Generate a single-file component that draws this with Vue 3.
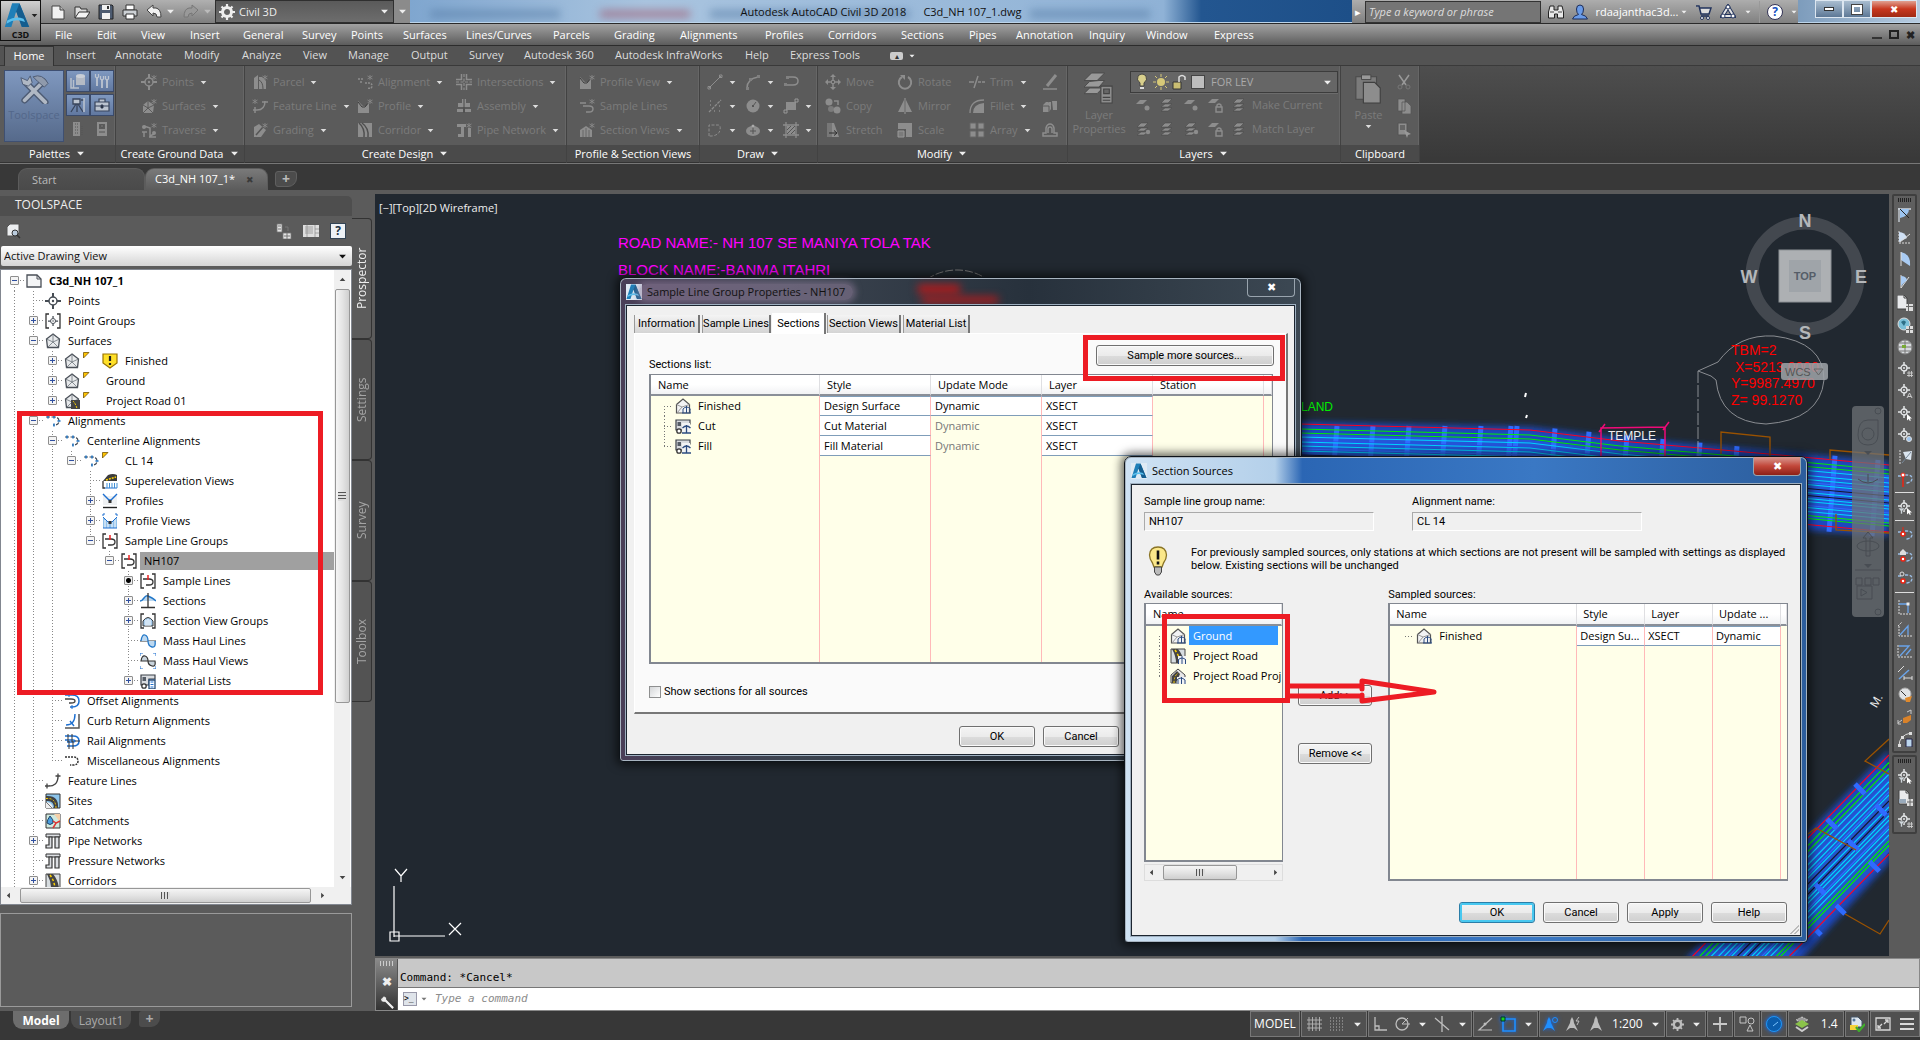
<script setup>
import { h } from 'vue'

const G = '#8d8d8d'
const star = '<path d="M13 1v5M10.500 2l5 3M15.500 2l-5 3" stroke="currentColor" stroke-width=".8" fill="none"/>'
const cross = (c) => `<circle cx="8" cy="8" r="4" fill="none" stroke="${c}" stroke-width="1.500"/><circle cx="8" cy="8" r="1.200" fill="${c}"/><path d="M8 0v4M8 12v4M0 8h4M12 8h4" stroke="${c}" stroke-width="2"/>`
const surf = '<path d="M8 1l6.500 5-1 8.500H2.500L1.500 6z" fill="#e8eaec" stroke="#4a5058" stroke-width="1.300"/><path d="M8 1v8l6.500-3M8 9L1.500 6M8 9l-5.500 5.500M8 9l5.500 5.500" stroke="#6c737b" fill="none" stroke-width=".8"/>'
const surfSec = '<path d="M1.500 6.500L8 1l6.500 5.500V15h-13z" fill="#f2f3f4" stroke="#555" stroke-width="1.200"/><path d="M1.500 6.500L7 9l7.500-2.500M7 9l-5 6" stroke="#999" fill="none"/><path d="M7 15h9M8 11q3.500-4 7.500 0M11.500 8v7M8 11v4M15 11v4" stroke="#2c4c80" fill="none"/>'
const truck = '<path d="M1 2h14v4H9v6H1z" fill="#d9dce0" stroke="#3b4048" stroke-width="1.200"/><path d="M2.500 4H6v4H2.500z" fill="#555c66"/><circle cx="4" cy="13" r="2.200" fill="#fff" stroke="#333" stroke-width="1.300"/>'
const road = '<path d="M1 1h14v14H1z" fill="#d7dde0" stroke="#444" stroke-width="1"/><path d="M2 1h6q5 6 6 14H6Q6 8 2 1z" fill="#454545"/><path d="M5 2q4 5 5 13" stroke="#ffd200" stroke-width="1.500" stroke-dasharray="2.500 2" fill="none"/>'
const align = '<path d="M1 4h8q5 0 5 4t-5 4H8" fill="none" stroke="#444b55" stroke-width="1.200" stroke-dasharray="4 1.500"/><path d="M3 2.500v3M9 2.500v3M9 10.500v3M12.500 8h3" stroke="#1a6fc0" stroke-width="1.500"/>'
const bracket = '<path d="M4 1H1v14h3M12 1h3v14h-3" stroke="#333" stroke-width="1.300" fill="none"/>'
const net = '<path d="M1 1h14v3H1z" fill="#dcdfe3" stroke="#333"/><path d="M4 4h3v11H1v-3h3zM10 4h4v11h-4z" fill="#dcdfe3" stroke="#333" stroke-width="1.200"/>'
const sheets = '<path d="M2 6l4-4h7l-4 4zM2 10l4-3h7l-4 3zM2 14l4-3h7l-4 3z" fill="currentColor" stroke="#4a4a4a" stroke-width=".6"/>'
const page = '<path d="M3 1h7l3 3v11H3z" fill="#e9eaec" stroke="#444"/><path d="M10 1v3h3" fill="none" stroke="#444"/>'
const target = (x) => `<circle cx="7" cy="7" r="3" fill="none" stroke="#e4e6e8" stroke-width="1.300"/><circle cx="7" cy="7" r="1" fill="#e4e6e8"/><path d="M7 1v3M7 10v3M1 7h3M10 7h3" stroke="#e4e6e8" stroke-width="1.500"/>${x}`
const hash = '<path d="M10 12h6M10 14.500h6M12 10v6M14.500 10v6" stroke="#ccc" stroke-width=".9"/>'
const funnel = '<path d="M1 9h7l-2.500 3v3h-2v-3z" fill="#cfd6db" stroke="#555" stroke-width=".6"/>'
const arrowCur = '<path d="M10 9v6.500l1.800-1.500 1 2 1-.6-.9-1.900H15z" fill="#fff"/>'
const redAlign = '<path d="M1 5h3M8 4h2q5 0 5 3.500T10 12H8" fill="none" stroke="#9cc0e8" stroke-width="1.300" stroke-dasharray="3 1.500"/>'

const icons = {
  tri: '<path d="M3 5.500h10L8 11z" fill="currentColor"/>',
  newf: '<path d="M2 2h8l4 4v9H2z" fill="#f1f1f1" stroke="#444"/><path d="M10 2v4h4" fill="#bbb" stroke="#444"/>',
  open: '<path d="M1 14V3h5l1 2h6v3" fill="#ddd" stroke="#333"/><path d="M1 14l4-6h11l-4 6z" fill="#f3f3f3" stroke="#333"/>',
  save: '<path d="M1 1h13l1 1v13H1z" fill="#4d5b70" stroke="#222"/><path d="M4 1h8v5H4zM4 9h8v6H4z" fill="#f1f1f1"/><path d="M9 2h2v3H9z" fill="#333"/>',
  print: '<path d="M4 1h8v5H4z" fill="#fff" stroke="#333"/><path d="M1 6h14v6H1z" fill="#ccd0d4" stroke="#333"/><path d="M4 10h8v5H4z" fill="#fff" stroke="#333"/>',
  undo: '<path d="M1 6l6-5v3h3q5 1 5 9H11q0-4-4-4v3z" fill="#f0f0f0" stroke="#444"/>',
  redo: '<path d="M15 6L9 1v3H6q-5 1-5 9h4q0-4 4-4v3z" fill="#999" stroke="#777"/>',
  gear: '<circle cx="8" cy="8" r="4.500" fill="none" stroke="currentColor" stroke-width="3"/><path d="M8 0v3M8 13v3M0 8h3M13 8h3M2.500 2.500l2 2M11.500 11.500l2 2M13.500 2.500l-2 2M4.500 11.500l-2 2" stroke="currentColor" stroke-width="2.200"/>',
  binoc: '<path d="M2 2h4v4h4V2h4l1.500 6v6h-6v-4h-3v4h-6V8z" fill="#e8e8e8" stroke="#222"/><path d="M2 8h4M10 8h4" stroke="#444"/>',
  user: '<path d="M8 1q3.500 0 3.500 4T9.500 10.500q5 1 6 4.500H.5q1-3.500 6-4.500Q4.500 9 4.500 5T8 1z" fill="#6a9be8" stroke="#1c2c58"/>',
  cart: '<path d="M0 2h3l2 8h8l2-6H4M5 12h8" fill="#ddd" stroke="#22335c" stroke-width="1.500"/><circle cx="6" cy="14" r="1.500" fill="#fff" stroke="#22335c"/><circle cx="12" cy="14" r="1.500" fill="#fff" stroke="#22335c"/>',
  a360: '<path d="M8 3L2.500 12h11z" fill="none" stroke="#22335c" stroke-width="4"/><path d="M8 3L2.500 12h11z" fill="none" stroke="#e6e6e6" stroke-width="2"/><circle cx="8" cy="3" r="2" fill="#fff" stroke="#22335c"/><circle cx="3" cy="12" r="2" fill="#fff" stroke="#22335c"/><circle cx="13" cy="12" r="2" fill="#fff" stroke="#22335c"/>',
  wrench: '<path d="M3 3l12 12" stroke="#333" stroke-width="4"/><path d="M3 3l12 12" stroke="#eee" stroke-width="2.500"/><path d="M1 4l3 1 1-1-1-3 3 2v3L5 8 2 7z" fill="#eee"/>',
  toolspace: '<path d="M4 5l10 10M13 4L3 14" stroke="#4d5b73" stroke-width="3.500" stroke-linecap="round"/><path d="M4 5l10 10M13 4L3 14" stroke="#b0b8c4" stroke-width="2" stroke-linecap="round"/><path d="M1 2l1 3.500 3 1 2-2L6 1 4.500 3.500z" fill="#b0b8c4" stroke="#4d5b73" stroke-width=".5"/><path d="M7.500 1.500q5-2 8 3.500l-2 2-3.500-3z" fill="#8f9aac" stroke="#4d5b73" stroke-width=".5"/>',
  db: '<path d="M6 3v9h9V3" fill="#b4bac4"/><ellipse cx="10.500" cy="3" rx="4.500" ry="2" fill="#c9ced6"/><path d="M1 5v10h8M3.500 7v8" stroke="#b8c0cc" stroke-width="1.500" fill="none"/>',
  tools: '<path d="M1.500 1v3l1.500 1 1.500-1V1M6.500 3v3L8 7l1.500-1V3M11.500 3v3l1.500 1 1.500-1V3" fill="none" stroke="#bcc4d0" stroke-width="1.300"/><path d="M3 5v8M8 7v8M13 7v8" stroke="#bcc4d0" stroke-width="1.800"/>',
  survey: '<path d="M3 2h7v5H3zM11 3h3M6 7L1 15M7 7v8M8 7l5 8" stroke="#39455c" fill="#bcc4d0" stroke-width="1.300"/><path d="M14 1v14" stroke="#bcc4d0" stroke-width="1.500"/>',
  toolbox: '<path d="M1 5h14v9H1zM5 5V2h6v3" fill="#bcc4d0" stroke="#39455c" stroke-width="1.200"/><path d="M1 9h14M7 8h2v3H7z" stroke="#39455c"/>',
  calc: `<path d="M3 1h7v14H3z" fill="${G}"/><path d="M5 3h3M5 6h3M5 9h3M5 12h3M12 5v10" stroke="#555" stroke-dasharray="1 1"/>`,
  palette: `<path d="M3 1h10v14H3z" fill="${G}"/><path d="M5 3h6v5H5z" fill="#5b5b5b"/><path d="M7 4h2v2H7zM5 11h6" fill="#aaa" stroke="#555"/>`,
  points: `${cross(G)}${star}`,
  surfaces: `<path d="M2 7l5-4 6 4-1 8H2z" fill="${G}"/><path d="M7 3v7L2 7M7 10l6-3M7 10l-5 5M7 10l5 5" stroke="#5b5b5b" fill="none"/>${star}`,
  traverse: `<path d="M3 4l6 2v8l4-2M1 10h5M3 10v5M2 5h3M8 15h7" fill="none" stroke="${G}" stroke-width="1.500"/><circle cx="3" cy="5" r="2" fill="${G}"/><circle cx="13" cy="11" r="2" fill="${G}"/>${star}`,
  parcel: `<path d="M2 4l4-3v14H2zM7 3h3l4 4v8H7z" fill="${G}"/><path d="M7 6q4 2 4 9" stroke="#555" fill="none"/>${star}`,
  feature: `<path d="M1 12h4q8 0 8-9M10 4h6M3 9v6" fill="none" stroke="${G}" stroke-width="1.500"/><path d="M3 1v5M.5 2l5 3M5.500 2l-5 3" stroke="${G}" stroke-width=".8"/>`,
  grading: `<path d="M2 5l5-3 7 6-5 7H2z" fill="${G}"/><path d="M4 13l7-8" stroke="#555" stroke-width="1.500"/>${star}`,
  alignment: `<path d="M1 5h6M3 8h3M8 9h4q3 0 3 3t-5 2" fill="none" stroke="${G}" stroke-width="1.500" stroke-dasharray="2 1"/>${star}`,
  profile: `<path d="M1 3l5 5h3l3-4v11H1z" fill="${G}"/><path d="M1 4l4 5h3l4-5" stroke="#3c3c3c" fill="none"/>${star}`,
  corridor: `<path d="M1 1h14v14H1z" fill="${G}"/><path d="M2 1q6 5 5 14M5 1q7 5 6 14" stroke="#4f4f4f" stroke-width="1.500" fill="none"/>`,
  intersect: `<path d="M5.500 0v5.500H0M10.500 0v5.500H16M5.500 16v-5.500H0M10.500 16v-5.500H16" fill="none" stroke="${G}" stroke-width="1.500"/><path d="M8 0v16M0 8h16" stroke="${G}" stroke-width="1.200" stroke-dasharray="3 1.500"/>`,
  assembly: `<path d="M6 1h4v4h4v4H2V5h4zM1 11h6v3H1zM9 11h6v3H9z" fill="${G}"/><path d="M8 1v14" stroke="#4a4a4a"/>`,
  pipenet: `<path d="M1 2h9v3H8v10H2v-3h3V5H1zM12 6h3v9h-3z" fill="${G}"/>${star}`,
  sline: `<path d="M1 5h6M4 8h6q4 0 4 3t-4 3H7" fill="none" stroke="${G}" stroke-width="1.400"/>${star}`,
  sview: `<path d="M1 15V8l6-4 6 4v7z" fill="${G}"/><path d="M4 8v7M7 6v9M10 8v7" stroke="#666"/>${star}`,
  line: `<path d="M2 14L14 2" stroke="${G}"/><path d="M1 12.500h2.500V15H1zM12.500 1H15v2.500h-2.500z" fill="none" stroke="#999" stroke-width=".8"/>`,
  arc: `<path d="M2 14q0-9 11-11" stroke="${G}" fill="none" stroke-width="1.500"/><path d="M1 13h3v3H1zM12 1h3v3h-3zM4 4h3v3H4z" fill="#808080"/>`,
  pline: `<path d="M4 3h6q5 0 5 4t-5 4H3" stroke="${G}" fill="none" stroke-width="1.500"/><path d="M3 2h3v3H3zM1 9h3v3H1z" fill="#808080"/>`,
  cline: `<path d="M2 14L14 2M3 3h1M12 13h1M3 7h1M12 8h1M7 13h1" stroke="${G}" stroke-width="1.300" stroke-dasharray="3 1"/>`,
  circle: `<circle cx="8" cy="8" r="6.500" fill="${G}"/><path d="M8 8l3-4" stroke="#555"/><path d="M7 7h2v2H7z" fill="#555"/>`,
  rect: `<path d="M3 4h10v8H3z" fill="${G}"/><path d="M12 1h3v3h-3zM1 12h3v3H1z" fill="none" stroke="#999"/>`,
  arc2: `<path d="M2 14V3h9q3 0 2 5t-8 6z" stroke="${G}" fill="none" stroke-dasharray="3 1.500"/>`,
  ellipse: `<ellipse cx="8" cy="9" rx="7" ry="5" fill="${G}"/><path d="M8 2v10M5 9h6" stroke="#555"/><circle cx="8" cy="4" r="1.500" fill="#aaa"/>`,
  hatch: `<path d="M3 0v16M13 0v16M0 3h16M0 13h16" stroke="${G}" stroke-width="1.300"/><path d="M4 4h8v8H4z" fill="${G}"/><path d="M4 8l4-4M4 12l8-8M8 12l4-4" stroke="#555"/>`,
  move: `<path d="M8 0l3 3H5zM8 16l3-3H5zM0 8l3-3v6zM16 8l-3-3v6z" fill="${G}"/><path d="M8 3v3M8 10v3M3 8h3M10 8h3" stroke="${G}" stroke-width="1.500"/><path d="M6.500 6.500h3v3h-3z" fill="none" stroke="${G}"/>`,
  copy: `<circle cx="4" cy="4" r="3.500" fill="${G}"/><circle cx="6" cy="11" r="3" fill="#7b7b7b"/><circle cx="12" cy="12" r="3.500" fill="${G}"/><path d="M9 3h4v4" stroke="${G}" fill="none" stroke-width="1.500"/>`,
  stretch: `<path d="M2 1h7l5 14H2z" fill="${G}"/><path d="M2 1h5v14H2z" fill="#777"/><path d="M4 11h7M9 8.500l3 2.500-3 2.500" stroke="#2d2d2d" fill="none"/>`,
  rotate: `<path d="M5 3a6.200 6.200 0 1 0 6 0" stroke="${G}" fill="none" stroke-width="2"/><path d="M3 1h5v5z" fill="${G}"/>`,
  mirror: `<path d="M7 2v12H1zM9 2v12h6z" fill="${G}"/><path d="M8 0v16" stroke="#aaa" stroke-width=".8"/>`,
  scale: `<path d="M1 1h14v14h-6V7H1z" fill="${G}"/><path d="M1 9h6v6H1z" fill="#7b7b7b" stroke="#999"/>`,
  trim: `<path d="M0 8h5M9 8h3M13 8h3M9 2L5 14" stroke="${G}" stroke-width="1.500"/>`,
  fillet: `<path d="M4 15q0-9 11-10v10z" fill="${G}"/><path d="M1 15Q1 2 15 2" stroke="${G}" fill="none" stroke-width="1.300"/>`,
  array: `<path d="M1 1h6v6H1zM9 1h6v6H9zM1 9h6v6H1zM9 9h6v6H9z" fill="${G}" stroke="#666"/>`,
  erase: `<path d="M14 1L5 12" stroke="${G}" stroke-width="3"/><path d="M1 15h14" stroke="${G}" stroke-width="1.500"/>`,
  explode: `<path d="M1 7l3-3h5v7l-2 3H1zM10 3h5v9h-4z" fill="${G}"/><path d="M1 8h6v6M6 4l4-2" stroke="#5b5b5b" fill="none"/>`,
  offset: `<path d="M1 14h14v-3h-3V6q-1-4-4-4T4 6v5H1zM6 11V7q0-2 2-2t2 2v4" fill="none" stroke="${G}" stroke-width="1.500"/>`,
  sheets,
  sheetB: sheets + '<circle cx="13" cy="11" r="2.200" fill="currentColor"/>',
  sheetO: '<path d="M1 7l4-4h7L8 7z" fill="currentColor"/><circle cx="12" cy="11" r="2.500" fill="currentColor"/>',
  sheetL: '<path d="M1 6l4-4h7L8 6z" fill="currentColor"/><path d="M9 10h6v5H9zM10 10V8q2-2 4 0v2" fill="none" stroke="currentColor" stroke-width="1.400"/>',
  layerprops: '<path d="M0 4l4-4h7L7 4zM0 7.500l3-3 5-.5h3L8 7.500zM0 11l3-3h7l-3 3z" fill="currentColor" stroke="#4a4a4a" stroke-width=".5"/><path d="M9 7h6v9H9z" fill="#8d8d8d" stroke="#444" stroke-width=".6"/><path d="M10.500 8.500h3v2.500h-3zM10 13h4M10 14.500h4" stroke="#444" stroke-width=".6" fill="#666"/>',
  paste: `<path d="M1 2h11v12H1z" fill="#7b7b7b" stroke="#4a4a4a" stroke-width=".6"/><path d="M4 1h5v2.500H4z" fill="#999" stroke="#444" stroke-width=".5"/><path d="M5 5h6l3 3v8H5z" fill="${G}" stroke="#3f3f3f" stroke-width=".6"/>`,
  cut: `<path d="M3 1l7 10M13 1L6 11" stroke="#999" stroke-width="1.500"/><circle cx="4" cy="13" r="2" fill="none" stroke="#777"/><circle cx="12" cy="13" r="2" fill="none" stroke="#777"/>`,
  copyc: `<path d="M2 1h7v12H2zM6 4h5l4 4v8H6z" fill="${G}" stroke="#555" stroke-width=".7"/>`,
  pastes: `<path d="M2 1h9v12H2z" fill="${G}" stroke="#555"/><path d="M4 3h5v5H4z" fill="#666"/><path d="M8 8l7 4-3 1-1 3z" fill="#999"/>`,
  // toolspace tree
  doc: '<path d="M1 2h10l4 4v8H1z" fill="#f4f5f6" stroke="#4a4f57" stroke-width="1.300"/><path d="M11 2v4h4" fill="none" stroke="#4a4f57"/>',
  tpoints: cross('#464c54'),
  tgroups: bracket + '<g transform="translate(3 3) scale(.63)">' + cross('#464c54') + '</g>',
  surf,
  surfroad: surf + '<path d="M7 7h9v9H7z" fill="#444"/><path d="M9 8q3 3 4 8" stroke="#ffd200" stroke-dasharray="2 1" fill="none"/>',
  align,
  superel: '<path d="M1 8l5-6q5-2 9 0v6z" fill="#3c3c3c"/><path d="M4 7l10-3" stroke="#ffd200" stroke-width="1.500" stroke-dasharray="2 1"/><path d="M1 8v7h2" fill="none" stroke="#333" stroke-width="1.300"/><path d="M3 15h12" stroke="#1d6fd0"/><path d="M5 10v5M7.500 10v5M10 10v5M12.500 10v5M15 10v5" stroke="#3f8fd6"/>',
  tprofile: '<path d="M1 3h14v9H1z" fill="#eef0f2"/><path d="M1 1l6 6h2l6-6" stroke="#1d6fd0" fill="none" stroke-width="1.400"/><path d="M6.500 7h3v3h-3z" fill="#333"/><path d="M1 14.500h14" stroke="#222" stroke-width="1.400"/>',
  tpview: '<path d="M1 4l5 5h4l5-5v11H1z" fill="#8fc0ea"/><path d="M3 7v8M6 9v6M10 9v6M13 6v9" stroke="#fff"/><path d="M1 4l5 5h4l5-5" stroke="#1d6fd0" fill="none"/><path d="M6.500 8h3v3h-3z" fill="#333"/><path d="M1 3V1h2M15 3V1h-2M1 15h14" stroke="#1d6fd0" fill="none"/>',
  slg: bracket + '<path d="M3 6h6q4 0 4 3t-4 3H6" fill="none" stroke="#333" stroke-width="1.300"/><path d="M8 2v5" stroke="#e22" stroke-width="1.500"/>',
  tsection: '<path d="M1 8q7-9 14 0z" fill="#bcd8f0"/><path d="M0 8q2 0 4-3t4-2 4 2 4 3" stroke="#2277c8" fill="none" stroke-width="1.400"/><path d="M8 0v15M1 14.500h14" stroke="#333" stroke-width="1.300"/>',
  tsvg: bracket + '<path d="M3 13V8q5-7 10 0v5z" fill="#a8cdee" stroke="#333"/><path d="M6 7v6M8 6v7M10 7v6" stroke="#fff"/>',
  mass: '<path d="M0 8h16" stroke="#333"/><path d="M1 8q1-7 4-6t3 6 4 6 3-6" fill="#bcd8f0" stroke="#2277c8" stroke-width="1.300"/>',
  massv: '<path d="M1 8q1-6 4-5t3 5 4 5 3-5z" fill="#c8d3dc" stroke="#333" stroke-width="1.200"/><path d="M0 3V0h3M16 3V0h-3M0 13v3h3M16 13v3h-3" stroke="#1d6fd0" fill="none"/>',
  material: truck + '<path d="M9 7h6v9H9z" fill="#fff" stroke="#234a78" stroke-width="1.300"/><path d="M10.500 9h3M10.500 11.500h3M10.500 14h3" stroke="#1d6fd0"/>',
  offs: '<path d="M1 2h7q7 0 7 6t-7 6H6" fill="none" stroke="#1d6fd0" stroke-width="1.500"/><path d="M1 6h6q4 0 4 2t-4 2H5" fill="none" stroke="#444" stroke-width="1.300"/><path d="M5 0v4M8 12v4" stroke="#1d6fd0"/>',
  curb: '<path d="M15 1v14H1" fill="none" stroke="#555" stroke-width="1.500"/><path d="M2 12q9 0 9-11M6 8l4 5" stroke="#1d6fd0" fill="none" stroke-width="1.400"/>',
  rail: '<path d="M1 3h8q6 0 6 5t-6 5H3M1 7h8q2 0 2 1t-2 1H3" fill="none" stroke="#1d6fd0" stroke-width="1.500"/><path d="M4 1v8M8 1v8M5 8v8M9 8v8M11 8h5" stroke="#333"/>',
  misc: '<path d="M1 4h8q5 0 5 4t-5 4H6" fill="none" stroke="#333" stroke-width="1.500" stroke-dasharray="2 1"/>',
  feat: '<path d="M2 13q11 1 11-10M0 13h5M2 10.500v5M10.500 3h5M13 .5v5" fill="none" stroke="#444" stroke-width="1.300"/>',
  sites: '<path d="M1 1h14v14H1z" fill="#8cc4ea" stroke="#333"/><path d="M1 3q13-1 12 12H9Q9 7 1 8z" fill="#3d4045"/><path d="M1 5.500q10-1 10 10" stroke="#ffd200" stroke-dasharray="2 1.500" fill="none"/><path d="M1 9q6 0 7 6H1z" fill="#eee"/><path d="M1 9l6 6" stroke="#777" fill="none"/>',
  catch: '<path d="M1 1h14v14H1z" fill="#cfe9df" stroke="#333"/><path d="M9 1h6v8z" fill="#f5cfa8"/><path d="M5 3q4 4 3 7-3 3-6 0 0-3 3-7z" fill="#4a9fe0" stroke="#246"/><path d="M15 8l-4 2-3 5M11 10L8 8" stroke="#d33" stroke-width="1.500" fill="none"/>',
  net, road, surfSec,
  truckSec: truck + '<path d="M7 5h8v10H7z" fill="#f2f3f4"/><path d="M7 15h9M7.500 10q4-4 8 0M11.500 7v8" stroke="#2c4c80" stroke-width="1.300" fill="none"/>',
  roadSec: road + '<path d="M8 8h8v8H8z" fill="#f2f3f4"/><path d="M8 12q4-4 8 0M12 8v8M8.500 12v4M15.500 12v4" stroke="#2c4c80" fill="none"/>',
  surfRoadSec: '<path d="M1 7l7-6 7 6v8H1z" fill="#e6e6e6" stroke="#444"/><path d="M2 15V8l5-5 3 3-4 9z" fill="#444"/><path d="M4 15q0-7 4-10" stroke="#ffd200" stroke-dasharray="2 1.500" fill="none"/><path d="M7 9h9v7H7z" fill="#f2f3f4"/><path d="M7 12q4-4 8 0M11.500 9v7M8 12v4M15 12v4" stroke="#2c4c80" fill="none"/>',
  flag: '<path d="M1 1h11L1 12z" fill="#ffc400" stroke="#6b4c00" stroke-width="1.500"/>',
  warn: '<path d="M1 1h14v9l-7 5-7-5z" fill="#ffe028" stroke="#9a7400" stroke-width="1.200"/><path d="M8 3v5M8 10v2" stroke="#222" stroke-width="2.200"/>',
  itemview: '<path d="M2 4l3-3h9v9l-3 3H2z" fill="#eceef0" stroke="#555"/><circle cx="10" cy="10" r="3" fill="#bcd" stroke="#333"/><path d="M12 12l3 3" stroke="#333" stroke-width="1.500"/>',
  panorama: '<path d="M1 1h5v8H1zM7 10h8v6H7z" fill="#e4e4e4" stroke="#777" stroke-width=".8"/><path d="M2 3h3M2 6h3M8 13h6M11 10v6M9 4h3v4" stroke="#777" fill="none"/>',
  preview: '<path d="M0 2h16v12H0z" fill="#dedede"/><path d="M2 4h8M2 6h8M2 8h8M2 10h8M12 2v12M4 2v12M12 6h4M12 10h4" stroke="#8a8a8a" stroke-width=".7"/>',
  // side toolbar
  s1: '<path d="M2 1v14M1 2h13" stroke="#cfd6dd" stroke-width="1.300"/><path d="M3 2h9q0 7-9 9z" fill="#9cc4f0"/><path d="M3 2l9 9" stroke="#222"/>',
  s2: '<path d="M2 2v12h12" stroke="#ddd" stroke-dasharray="2 1" fill="none"/><path d="M2 3q6 0 8 6l-8 4z" fill="#cfe0f4"/><path d="M13 5L3 13" stroke="#ddd"/>',
  s3: '<path d="M4 1q10 2 9 14L4 9z" fill="#a9cbf3"/><path d="M4 1v14" stroke="#ddd"/>',
  s4: '<path d="M4 2v13L12 4" stroke="#ddd" fill="none"/><path d="M4 3q5 0 6 4l-6 6z" fill="#a9cbf3"/>',
  s5: '<g transform="translate(-3 -1)">' + page + '</g><path d="M9 9h7v7H9z" fill="#ddd"/><path d="M9 11.500h7M11.500 9v7" stroke="#666"/>',
  s6: '<circle cx="7" cy="7" r="6" fill="#7cc0d8" stroke="#ddd"/><path d="M4 5q3-3 5 0l-2 4z" fill="#2d6f86"/><path d="M9 9h7v7H9z" fill="#ddd"/><path d="M9 12.500h7M12.500 9v7" stroke="#666"/>',
  s7: '<circle cx="8" cy="8" r="7" fill="#d7dadd" stroke="#888"/><path d="M1 8h14M8 1v14M3 4h10M3 12h10" stroke="#777" fill="none"/><path d="M5 6h4v3H5z" fill="#7a3"/>',
  s8: target(hash),
  s9: target('<path d="M10 15l2.500-5 2.500 5M11 13.500h3" stroke="#ccc" fill="none"/>'),
  s10: target(arrowCur),
  s11: target('<circle cx="12" cy="12" r="2.500" fill="#9cc4f0" stroke="#ddd"/>'),
  s12: '<path d="M3 1v14" stroke="#ddd" stroke-dasharray="2 1"/><path d="M6 3l9-1-1 9-5-1z" fill="#dce6f0"/><path d="M5 14l9-11" stroke="#789"/>',
  s13: redAlign + '<path d="M6 4v12" stroke="#e21" stroke-width="1.500"/><circle cx="6" cy="4" r="2" fill="#fff" stroke="#e21"/>',
  s14: target(funnel + arrowCur),
  s15: redAlign + '<circle cx="6" cy="7" r="2" fill="#fff" stroke="#e21" stroke-width="1.500"/><path d="M6 0v5" stroke="#e21"/>',
  s16: redAlign + '<path d="M3 6V3l3-3 3 3v3z" fill="#ddd"/><circle cx="6" cy="10" r="2" fill="#fff" stroke="#e21" stroke-width="1.500"/>',
  s17: redAlign + '<circle cx="5" cy="3" r="2" fill="none" stroke="#ddd"/><circle cx="6" cy="10" r="2" fill="#fff" stroke="#e21" stroke-width="1.500"/>',
  s18: '<path d="M2 1v14h13" stroke="#ddd" stroke-dasharray="2 1" fill="none"/><path d="M2 5h9v9" stroke="#6aa4ea" stroke-width="1.300" fill="none"/><path d="M9.500 3.500h3v3h-3z" fill="#eee"/>',
  s19: '<path d="M2 5v10h13M1 5l4-4" stroke="#ddd" stroke-dasharray="2 1" fill="none"/><path d="M3 14l8-9v9" stroke="#6aa4ea" stroke-width="1.300" fill="none"/>',
  s20: '<path d="M1 2v12h14" stroke="#ddd" stroke-dasharray="2 1" fill="none"/><path d="M2 3h10L3 13M9 12l5-6" stroke="#6aa4ea" stroke-width="1.300" fill="none"/>',
  s21: '<path d="M1 7l6-6M7 13h8M7 11v4M15 11v4" stroke="#ddd" fill="none"/><path d="M2 14l10-9" stroke="#6aa4ea" stroke-width="1.500"/>',
  s22: '<circle cx="8" cy="7" r="6" fill="#e0e2e4" stroke="#aaa"/><path d="M4 4l5 5" stroke="#333"/><path d="M8 11l7-2-2 6H9z" fill="#e08a2c"/>',
  s23: '<path d="M1 14l4-3M10 3l4-2v4M1 11v4h3" stroke="#ccc" fill="none"/><path d="M6 9l8-3v5l-4 3H6z" fill="#d9822a"/>',
  s24: '<path d="M2 15Q2 4 14 2" stroke="#ddd" fill="none"/><path d="M1 13h3v3H1zM12 1h3v3h-3zM4 5h3v3H4z" fill="#ddd"/><path d="M9 8h6v8H9z" fill="#bcd6ee" stroke="#224"/>',
  s25: '<g transform="translate(-1 -1)">' + page + '</g><path d="M2 9h7v4H2z" fill="#9ab"/><path d="M10 9h6v7h-6z" fill="#ddd"/><path d="M10 12h6M13 9v7" stroke="#666"/>',
  s26: target(funnel + hash),
  // status bar
  grid: '<path d="M3 1v14M6.500 1v14M10 1v14M13.500 1v14M1 4h15M1 8h15M1 12h15" stroke="#b4b4b4" stroke-width=".9"/>',
  snap: '<path d="M1 2h14M1 5h14M1 8h14M1 11h14M1 14h14" stroke="#b4b4b4" stroke-width="1" stroke-dasharray="1 2"/>',
  ortho: '<path d="M3 1v13h12M3 10h4v4" stroke="#bdbdbd" fill="none" stroke-width="1.300"/>',
  polar: '<circle cx="7" cy="8" r="6" fill="none" stroke="#bdbdbd" stroke-width="1.300"/><path d="M7 8h8M7 8l6-6" stroke="#bdbdbd"/>',
  iso: '<path d="M1 2l14 12M8 0v16" stroke="#bdbdbd" stroke-width="1.300" fill="none"/>',
  otrack: '<path d="M15 2L2 14h13" stroke="#bdbdbd" stroke-width="1.200" fill="none"/><circle cx="8" cy="8" r="1.500" fill="#bdbdbd"/>',
  osnap: '<path d="M3 3h12v12H3z" stroke="#1f8fff" fill="none" stroke-width="1.600"/><path d="M1 1h4v4H1z" fill="#1fd01f" stroke="#032"/>',
  anno: '<path d="M7 0q2 3 2 6l4 9-4-3H5l-4 3 4-9q0-3 2-6z" fill="currentColor"/>',
  annoB: '<path d="M6 1q2 3 2 6l4 8-4-3H4l-4 3 4-8q0-3 2-6z" fill="currentColor"/><circle cx="12" cy="4" r="2.500" fill="none" stroke="currentColor"/>',
  annoC: '<path d="M6 1q2 3 2 6l4 8-4-3H4l-4 3 4-8q0-3 2-6z" fill="currentColor"/><path d="M13 1l-3 4h3l-2 4" fill="none" stroke="currentColor"/>',
  plus: '<path d="M8 1v14M1 8h14" stroke="#c8c8c8" stroke-width="1.800"/>',
  shapes: '<path d="M1 1h6v6H1zM8 15l3-6 3 6z" stroke="#c4c4c4" fill="none"/><circle cx="12" cy="5" r="3" stroke="#c4c4c4" fill="none"/>',
  blue: '<circle cx="8" cy="8" r="7.500" fill="#0b5cab" stroke="#2196f3"/><path d="M7 10l5-4" stroke="#7cc4ff"/>',
  isol: '<path d="M8 1l6 3-6 3-6-3z" fill="#999" stroke="#ddd" stroke-dasharray="1 1"/><path d="M8 4l7 4-7 4-7-4z" fill="#8bc34a"/><path d="M2 11l6 4 6-4" stroke="#ccc" fill="none" stroke-width="2"/>',
  sheet2: '<path d="M2 1h7l4 4v6H2z" fill="#dde6ee" stroke="#456"/><path d="M1 9h8v5H1z" fill="#f5d238"/><path d="M7 11l3 4 6-7" stroke="#3fae2a" stroke-width="2.200" fill="none"/><circle cx="5" cy="4" r="1.500" fill="#579"/>',
  full: '<path d="M1 2h14v12H1z" fill="none" stroke="#d8d8d8" stroke-width="1.300"/><path d="M9 8l4-4M10 4h3v3M7 8l-4 4M3 9v3h3" stroke="#d8d8d8" stroke-width="1.300" fill="none"/>',
  burger: '<path d="M1 3h14M1 8h14M1 13h14" stroke="#d8d8d8" stroke-width="2"/>',
  logo: '<path d="M5 .500h4.500L15.500 15H11L7.500 5.500 4.500 15H.5z" fill="#1f7fb8"/><path d="M7.500 5.500L9.500.500 15.500 15H11z" fill="#155d8e"/><path d="M2 11q5-3 10-1l1 2Q7 9.500 1.500 13z" fill="#5bc0ee"/>'
}
const Icon = (p) => h('svg', { viewBox: '0 0 16 16', class: 'ic', 'aria-hidden': 'true', innerHTML: icons[p.name] })
Icon.props = ['name']

const menus = ['File', 'Edit', 'View', 'Insert', 'General', 'Survey', 'Points', 'Surfaces', 'Lines/Curves', 'Parcels', 'Grading', 'Alignments', 'Profiles', 'Corridors', 'Sections', 'Pipes', 'Annotation', 'Inquiry', 'Window', 'Express']
const tabs = ['Home', 'Insert', 'Annotate', 'Modify', 'Analyze', 'View', 'Manage', 'Output', 'Survey', 'Autodesk 360', 'Autodesk InfraWorks', 'Help', 'Express Tools']

const ground = [['points', 'Points', 1], ['surfaces', 'Surfaces', 1], ['traverse', 'Traverse', 1]]
const design = [
  [['parcel', 'Parcel', 1], ['feature', 'Feature Line', 1], ['grading', 'Grading', 1]],
  [['alignment', 'Alignment', 1], ['profile', 'Profile', 1], ['corridor', 'Corridor', 1]],
  [['intersect', 'Intersections', 1], ['assembly', 'Assembly', 1], ['pipenet', 'Pipe Network', 1]]
]
const views = [['profile', 'Profile View', 1], ['sline', 'Sample Lines', 0], ['sview', 'Section Views', 1]]
const draw = [
  [['line', '', 1], ['cline', '', 1], ['arc2', '', 1]],
  [['arc', '', 1], ['circle', '', 1], ['ellipse', '', 1]],
  [['pline', '', 0], ['rect', '', 1], ['hatch', '', 1]]
]
const modify = [
  [['move', 'Move', 0], ['copy', 'Copy', 0], ['stretch', 'Stretch', 0]],
  [['rotate', 'Rotate', 0], ['mirror', 'Mirror', 0], ['scale', 'Scale', 0]],
  [['trim', 'Trim', 1], ['fillet', 'Fillet', 1], ['array', 'Array', 1]],
  [['erase', '', 0], ['explode', '', 0], ['offset', '', 0]]
]
const groups = [
  { id: 'ground', title: 'Create Ground Data', more: 1, cols: [ground] },
  { id: 'design', title: 'Create Design', more: 1, cols: design },
  { id: 'views', title: 'Profile & Section Views', more: 0, cols: [views] },
  { id: 'draw', title: 'Draw', more: 1, cols: draw },
  { id: 'modify', title: 'Modify', more: 1, cols: modify }
]
const layerRows = [
  { icons: ['sheetO', 'sheets', 'sheetO', 'sheetL', 'sheets'], label: 'Make Current' },
  { icons: ['sheetB', 'sheets', 'sheetB', 'sheetL', 'sheets'], label: 'Match Layer' }
]

// [level, expander, icon, label, markers]
const raw = [
  [0, '-', 'doc', 'C3d_NH 107_1'], [1, '', 'tpoints', 'Points'], [1, '+', 'tgroups', 'Point Groups'], [1, '-', 'surf', 'Surfaces'],
  [2, '+', 'surf', 'Finished', ['flag', 'warn']], [2, '+', 'surf', 'Ground', ['flag']], [2, '+', 'surfroad', 'Project Road 01', ['flag']],
  [1, '-', 'align', 'Alignments'], [2, '-', 'align', 'Centerline Alignments'], [3, '-', 'align', 'CL 14', ['flag']],
  [4, '', 'superel', 'Superelevation Views'], [4, '+', 'tprofile', 'Profiles'], [4, '+', 'tpview', 'Profile Views'], [4, '-', 'slg', 'Sample Line Groups'],
  [5, '-', 'slg', 'NH107'], [6, 'o', 'slg', 'Sample Lines'], [6, '+', 'tsection', 'Sections'], [6, '+', 'tsvg', 'Section View Groups'],
  [6, '', 'mass', 'Mass Haul Lines'], [6, '', 'massv', 'Mass Haul Views'], [6, '+', 'material', 'Material Lists'],
  [2, '', 'offs', 'Offset Alignments'], [2, '', 'curb', 'Curb Return Alignments'], [2, '', 'rail', 'Rail Alignments'], [2, '', 'misc', 'Miscellaneous Alignments'],
  [1, '', 'feat', 'Feature Lines'], [1, '', 'sites', 'Sites'], [1, '', 'catch', 'Catchments'], [1, '+', 'net', 'Pipe Networks'], [1, '', 'net', 'Pressure Networks'], [1, '+', 'road', 'Corridors']
]
const goesOn = (i, lvl) => {
  if (lvl < 2) return true
  for (let j = i + 1; j < raw.length; j++) {
    if (raw[j][0] < lvl) return false
    if (raw[j][0] === lvl) return true
  }
  return false
}
const tree = raw.map((r, i) => ({
  exp: r[1], icon: r[2], label: r[3], marks: r[4] || [],
  guides: Array.from({ length: r[0] }, (_, l) => goesOn(i, l)),
  on: goesOn(i, r[0]), root: i === 0
}))

const sections = [
  ['surfSec', 'Finished', 'Design Surface', true], ['truckSec', 'Cut', 'Cut Material', false], ['truckSec', 'Fill', 'Fill Material', false]
]
const available = [['surfSec', 'Ground'], ['roadSec', 'Project Road'], ['surfRoadSec', 'Project Road Proj']]

// corridor line work
const C = { r: '#ff0020', g: '#00f000', c: '#00d8ff', b: '#2f6bff', k: '#10182c', n: '#2a50e8' }
const bandLines = [[0, 'r'], [5, 'g'], [9, 'g'], [13, 'c'], [17, 'n'], [18, 'c'], [22, 'c'], [25, 'b'], [27, 'c'], [31, 'k'], [35, 'c'], [38, 'k'], [41, 'c'], [44, 'c'], [48, 'b'], [50, 'c'], [54, 'c'], [58, 'g'], [61, 'g'], [67, 'r']]
const base = [[685, 231], [925, 230], [1155, 236], [1245, 247], [1405, 261], [1514, 271]]
const upper = bandLines.map(([dy, c]) => ({ c: C[c], pts: base.map(([x, y]) => `${x},${y + dy}`).join(' ') }))
const lower = bandLines.map(([dy, c]) => ({ c: C[c], pts: `1514,${561 + dy * 1.48} 1310,${770 + dy * 1.48}` }))
const ties = [962, 998, 1034, 1070, 1106, 1136, 1142, 1180, 1214, 1252, 1288, 1325, 1362, 1460, 1503]
const tieY = (x) => (x < 1155 ? 236 : 236 + (x - 1155) * 0.0975) - 4

const sideA = ['s1', 's2', 's3', 's4', 's5', 's6', 's7', 's8', 's9', 's10', 's11', 's12', 's13', '|', 's14', '|', 's15', 's16', 's17', '|', 's18', 's19', 's20', 's21', 's22', 's23', 's24']
const sideB = ['s14', 's25', 's26']
</script>

<template>
  <div class="app">
    <header class="top">
      <button class="appbtn" aria-label="Application menu"><Icon name="logo" class="logo" /><Icon name="tri" class="tri" /><b>C3D</b></button>
      <div class="titlebar">
        <div class="qat">
          <button v-for="n in ['newf', 'open', 'save', 'print', 'undo']" :key="n" :aria-label="n"><Icon :name="n" /></button>
          <Icon name="tri" class="tri" />
          <button aria-label="redo"><Icon name="redo" /></button>
          <Icon name="tri" class="tri dim" />
        </div>
        <div class="workspace">
          <Icon name="gear" />
          <select aria-label="Workspace"><option>Civil 3D</option></select>
          <Icon name="tri" class="tri" />
        </div>
        <button class="qatmore" aria-label="Customize"><Icon name="tri" class="tri" /></button>
        <div class="glass">
          <span class="haze h1"></span><span class="haze h2"></span><span class="haze h3"></span><span class="haze h4"></span>
          <h1><span>Autodesk AutoCAD Civil 3D 2018</span><span>C3d_NH 107_1.dwg</span></h1>
        </div>
        <div class="info">
          <span class="play">▸</span>
          <input type="text" aria-label="Search" placeholder="Type a keyword or phrase" />
          <Icon name="binoc" /><Icon name="user" />
          <span class="who">rdaajanthac3d...</span><Icon name="tri" class="tri sm" />
          <Icon name="cart" /><Icon name="a360" /><Icon name="tri" class="tri sm" />
          <i class="vsep"></i>
          <span class="help">?</span><Icon name="tri" class="tri sm" />
        </div>
        <div class="winctl">
          <button aria-label="Minimize"><i class="mn"></i></button><button aria-label="Restore"><i class="mx"></i></button><button class="cl" aria-label="Close">✖</button>
        </div>
      </div>
      <nav class="menubar">
        <button v-for="m in menus" :key="m">{{ m }}</button>
        <span class="docctl"><i class="mn"></i><i class="mx"></i><b>✖</b></span>
      </nav>
    </header>

    <nav class="rtabs">
      <button v-for="t in tabs" :key="t" :class="{ on: t === 'Home' }">{{ t }}</button>
      <span class="rmin"><i>▴</i><Icon name="tri" class="tri sm" /></span>
    </nav>

    <div class="ribbon">
      <section class="panel palettes">
        <div class="body">
          <button class="toolspace"><Icon name="toolspace" /><span>Toolspace</span></button>
          <div class="six">
            <button v-for="n in ['db', 'tools', 'survey', 'toolbox']" :key="n" class="hot" :aria-label="n"><Icon :name="n" /></button>
            <button aria-label="calc"><Icon name="calc" /></button><button aria-label="palette"><Icon name="palette" /></button>
          </div>
        </div>
        <h2>Palettes <Icon name="tri" class="tri" /></h2>
      </section>
      <section v-for="g in groups" :key="g.id" class="panel" :class="g.id">
        <div class="body">
          <div v-for="(col, ci) in g.cols" :key="ci" class="col">
            <button v-for="it in col" :key="it[0]" class="cmd" :aria-label="it[0]">
              <Icon :name="it[0]" /><span v-if="it[1]">{{ it[1] }}</span><Icon v-if="it[2]" name="tri" class="tri" />
            </button>
          </div>
        </div>
        <h2>{{ g.title }} <Icon v-if="g.more" name="tri" class="tri" /></h2>
      </section>
      <section class="panel layers">
        <div class="body">
          <button class="big"><Icon name="layerprops" /><span>Layer</span><span>Properties</span></button>
          <div class="lcol">
            <div class="lcombo">
              <svg viewBox="0 0 56 18" class="lst"><path d="M3 3q4-4 8 0 2 4-2 7v3H5v-3Q1 7 3 3z" fill="#d8cf8c" stroke="#444" /><path d="M5 15h4" stroke="#ddd" stroke-width="2" /><circle cx="26" cy="9" r="4" fill="#d6c878" /><path d="M26 1v3M26 14v3M18 9h3M31 9h3M20 3l2 2M30 13l2 2M32 3l-2 2M22 13l-2 2" stroke="#d6c878" /><path d="M38 9h8v7h-8z" fill="#c9bd72" stroke="#333" /><path d="M44 9V4q3-3 6 0v3" fill="none" stroke="#ddd" stroke-width="1.500" /></svg>
              <i class="sw"></i>
              <select aria-label="Layer"><option>FOR LEV</option></select>
              <Icon name="tri" class="tri" />
            </div>
            <div v-for="r in layerRows" :key="r.label" class="lrow">
              <button v-for="(n, i) in r.icons" :key="i" :aria-label="n"><Icon :name="n" /></button><span>{{ r.label }}</span>
            </div>
          </div>
        </div>
        <h2>Layers <Icon name="tri" class="tri" /></h2>
      </section>
      <section class="panel clip">
        <div class="body">
          <button class="big"><Icon name="paste" /><span>Paste</span><Icon name="tri" class="tri" /></button>
          <div class="col">
            <button v-for="n in ['cut', 'copyc', 'pastes']" :key="n" class="cmd" :aria-label="n"><Icon :name="n" /></button>
          </div>
        </div>
        <h2>Clipboard</h2>
      </section>
    </div>

    <nav class="doctabs">
      <button class="dt">Start</button>
      <button class="dt on">C3d_NH 107_1* <span>✖</span></button>
      <button class="add" aria-label="New tab">+</button>
    </nav>

    <main class="work">
      <aside class="ts">
        <div class="tsmain">
          <h2 class="tshead">TOOLSPACE</h2>
          <div class="tsbar"><Icon name="itemview" /><span class="grow"></span><Icon name="panorama" /><Icon name="preview" /><b class="q">?</b></div>
          <div class="tssel"><select aria-label="View"><option>Active Drawing View</option></select><Icon name="tri" class="tri" /></div>
          <div class="treebox">
            <div class="treetop">
              <ul class="tree">
                <li v-for="(r, i) in tree" :key="i" :class="{ root: r.root, sel: r.label === 'NH107' }">
                  <i v-for="(g, gi) in r.guides" :key="gi" class="gd" :class="{ ln: g }"></i>
                  <i class="nd" :class="{ on: r.on, root: r.root }"><span v-if="r.exp" class="ex" :class="{ dot: r.exp === 'o', plus: r.exp === '+' }"></span></i>
                  <Icon :name="r.icon" />
                  <Icon v-for="m in r.marks" :key="m" :name="m" class="mark" :class="m" />
                  <span class="lb">{{ r.label }}</span>
                </li>
              </ul>
              <div class="vs"><Icon name="tri" class="tri up" /><div class="thumb"><i></i></div><Icon name="tri" class="tri" /></div>
            </div>
            <div class="hs"><Icon name="tri" class="tri lf" /><div class="thumb"><i></i></div><Icon name="tri" class="tri rt" /></div>
            <div class="mk mk1"></div>
          </div>
          <div class="detail"></div>
        </div>
        <div class="tstabs">
          <button v-for="(t, i) in ['Prospector', 'Settings', 'Survey', 'Toolbox']" :key="t" :class="{ on: i === 0 }">{{ t }}</button>
        </div>
      </aside>

      <div class="right">
        <div class="upper">
          <div class="canvas">
            <svg class="dwg" width="100%" height="100%">
              <defs><filter id="soft"><feGaussianBlur stdDeviation="3" /></filter></defs>
              <text x="4" y="18" class="vp">[−][Top][2D Wireframe]</text>
              <text x="243" y="54" class="mg">ROAD NAME:- NH 107 SE MANIYA TOLA TAK</text>
              <text x="243" y="81" class="mg">BLOCK NAME:-BANMA ITAHRI</text>
              <ellipse cx="582" cy="118" rx="48" ry="42" fill="none" stroke="#777" stroke-dasharray="8 2" />
              <text x="926" y="217" class="gn">LAND</text>
              <g fill="none">
                <polygon points="685,228 925,228 1155,233 1245,244 1405,258 1514,268 1514,342 925,300" fill="#1c49c0" filter="url(#soft)" />
                <polygon points="925,240 1155,246 1245,257 1405,271 1514,281 1514,330 925,290" fill="#2456d8" />
                <path v-for="x in ties" :key="x" :d="`M${x} ${tieY(x)}l-6 76`" stroke="#2f6bff" stroke-width="5" />
                <polyline v-for="(l, i) in upper" :key="i" :points="l.pts" :stroke="l.c" />
                <polygon points="1514,556 1310,766 1425,766 1514,668" fill="#1c49c0" filter="url(#soft)" />
                <polygon points="1514,575 1325,766 1415,766 1514,658" fill="#2354cc" />
                <polyline v-for="(l, i) in lower" :key="'l' + i" :points="l.pts" :stroke="l.c" stroke-width="1.200" />
                <path d="M1480 590l34 34M1452 625l60 60M1440 690l30 30M1420 715l26 26" stroke="#2f6bff" stroke-width="5" stroke-dasharray="14 16" />
                <path d="M1346 260v-22l49 5v20M1455 266v-10l59 5M1461 320v16l53 3M1514 545l-24 22 26 14M1433 640l8-6 40 22M1470 720l35 20 9-14" stroke="#9a5200" stroke-width="1.300" />
                <path d="M1226 262v-28l64-1v34M1224 238l6-8M1288 236l6-8" stroke="#f00a78" stroke-width="1.500" />
                <path d="M1336 182l-13-5 20-9q20-28 56-26 50 6 50 44-4 40-58 44-46-2-50-44z" stroke="#8a8d92" />
                <path d="M1323 177v86" stroke="#8a8d92" stroke-dasharray="12 2" />
              </g>
              <text x="1233" y="246" class="wt">TEMPLE</text>
              <g class="rd"><text x="1356" y="161">TBM=2</text><text x="1360" y="178">X=5213.0000</text><text x="1356" y="194">Y=9987.4970</text><text x="1356" y="211">Z= 99.1270</text></g>
              <path d="M1150 203l1-4M1151 224l1-3" stroke="#fff" stroke-width="2" />
              <text x="1496" y="513" class="wt" transform="rotate(-60 1500 509)">M.</text>
              <circle cx="1430" cy="82" r="53" fill="none" stroke="#43484f" stroke-width="13" />
              <rect x="1404" y="56" width="52" height="52" fill="#adb0b3" stroke="#8d9195" /><rect x="1414" y="66" width="32" height="32" fill="#9fa4a9" />
              <g class="cmp"><text x="1430" y="86" class="tp">TOP</text><text x="1430" y="33">N</text><text x="1430" y="145">S</text><text x="1374" y="89">W</text><text x="1486" y="89">E</text></g>
              <rect x="1406" y="169" width="47" height="17" rx="3" fill="#a0a4a9" opacity=".85" /><text x="1410" y="182" class="wcs">WCS</text><path d="M1439 175h9l-4.500 6z" fill="none" stroke="#666" />
              <g>
                <rect x="1477" y="212" width="32" height="211" rx="4" fill="#6d7176" opacity=".75" />
                <g fill="none" stroke="#484d53"><circle cx="1503" cy="217" r="3" /><path d="M1483 241q0-15 10-15h10v15q0 10-10 10t-10-10z" /><circle cx="1493" cy="240" r="6" /><path d="M1480 376h26M1481 384h6v7h-6zM1490 384h6v7h-6zM1498 384h6v7h-6zM1482 392h15v13h-15zM1486 395v7l6-3.500z" /><ellipse cx="1493" cy="352" rx="11" ry="5" /><path d="M1491 362v-18h-3l5-6 5 6h-3v18z" /><circle cx="1503" cy="418" r="3" /><path d="M1493 280v8M1483 285q10 8 20 0" /></g>
                <path d="M1489 257h8l-4 4zM1489 370h8l-4 4z" fill="#484d53" />
              </g>
              <g stroke="#fff" fill="none" stroke-width="1.200"><path d="M19 692v51M19 742h51M15 738h9v9h-9zM20 675l6 7 6-7M26 682v6M74 729l12 12M86 729l-12 12" /></g>
            </svg>

            <section class="dlg d1">
              <header><Icon name="logo" class="dl" /><span class="dt1">Sample Line Group Properties - NH107</span><span class="blot b1"></span><span class="blot b2"></span><button class="dx" aria-label="Close">✖</button></header>
              <div class="client">
                <div class="tabrow"><button v-for="t in ['Information', 'Sample Lines', 'Sections', 'Section Views', 'Material List']" :key="t" :class="{ on: t === 'Sections' }">{{ t }}</button></div>
                <div class="page">
                  <div class="prow"><span>Sections list:</span><button class="btn more">Sample more sources...</button></div>
                  <div class="gridbox g1">
                    <table>
                      <thead><tr><th class="w1">Name</th><th>Style</th><th>Update Mode</th><th>Layer</th><th>Station</th><th class="wl"></th></tr></thead>
                      <tbody>
                        <tr v-for="s in sections" :key="s[1]">
                          <td><span class="nm"><i class="stub" :class="{ last: s[1] === 'Fill', first: s[1] === 'Finished' }"></i><Icon :name="s[0]" />{{ s[1] }}</span></td>
                          <td class="ed">{{ s[2] }}</td><td :class="s[3] ? 'ed' : 'off'">Dynamic</td><td class="ed">XSECT</td><td></td><td></td>
                        </tr>
                        <tr class="fill"><td></td><td></td><td></td><td></td><td></td><td></td></tr>
                      </tbody>
                    </table>
                  </div>
                  <label class="chk"><input type="checkbox" />Show sections for all sources</label>
                </div>
                <div class="dbtns"><button class="btn">OK</button><button class="btn">Cancel</button></div>
              </div>
              <div class="mk mk2"></div>
            </section>

            <section class="dlg d2">
              <header><Icon name="logo" class="dl" /><span>Section Sources</span><button class="dx red" aria-label="Close">✖</button></header>
              <div class="client">
                <div class="fields">
                  <label>Sample line group name:<input type="text" value="NH107" readonly /></label>
                  <label>Alignment name:<input type="text" value="CL 14" readonly /></label>
                </div>
                <div class="note">
                  <svg viewBox="0 0 20 30"><path d="M10 1q8 0 8.500 8 0 4-3 8l-1.500 4H6l-1.500-4q-3-4-3-8Q2 1 10 1z" fill="#fbe88a" stroke="#8a7426" stroke-width="1.300" /><path d="M6.500 21h7v5l-2 3h-3l-2-3z" fill="#bbb" stroke="#444" /><path d="M10 4.500v9M10 15.500v3" stroke="#111" stroke-width="2.600" /></svg>
                  <p>For previously sampled sources, only stations at which sections are not present will be sampled with settings as displayed below. Existing sections will be unchanged</p>
                </div>
                <div class="lists">
                  <div class="la">
                    <span>Available sources:</span>
                    <div class="gridbox">
                      <table>
                        <thead><tr><th>Name</th></tr></thead>
                        <tbody>
                          <tr v-for="(a, i) in available" :key="a[1]"><td><span class="nm"><i class="stub" :class="{ first: i === 0, last: i === 2 }"></i><Icon :name="a[0]" /><span :class="{ hl: i === 0 }">{{ a[1] }}</span></span></td></tr>
                          <tr class="fill"><td></td></tr>
                        </tbody>
                      </table>
                    </div>
                    <div class="hs"><Icon name="tri" class="tri lf" /><div class="thumb"><i></i></div><Icon name="tri" class="tri rt" /></div>
                  </div>
                  <div class="mid"><button class="btn">Add&gt;&gt;</button><button class="btn">Remove &lt;&lt;</button></div>
                  <div class="lbx">
                    <span>Sampled sources:</span>
                    <div class="gridbox">
                      <table>
                        <thead><tr><th class="w1">Name</th><th>Style</th><th>Layer</th><th>Update ...</th><th class="wl"></th></tr></thead>
                        <tbody>
                          <tr><td><span class="nm"><i class="stub only"></i><Icon name="surfSec" />Finished</span></td><td class="ed">Design Su...</td><td class="ed">XSECT</td><td class="ed">Dynamic</td><td></td></tr>
                          <tr class="fill"><td></td><td></td><td></td><td></td><td></td></tr>
                        </tbody>
                      </table>
                    </div>
                  </div>
                </div>
                <div class="dbtns"><button class="btn def">OK</button><button class="btn">Cancel</button><button class="btn">Apply</button><button class="btn">Help</button></div>
                <i class="grip"></i>
              </div>
              <div class="mk mk3"></div>
              <svg class="arrow" viewBox="0 0 154 28"><path d="M2 9h74M2 19h74M77 12V4l72 11-72 9v-6" fill="none" stroke="#ed1c24" stroke-width="5" stroke-linejoin="round" stroke-linecap="round" /></svg>
            </section>
          </div>

          <aside class="side">
            <div class="sp"><i class="gr"></i><template v-for="(n, i) in sideA" :key="i"><i v-if="n === '|'" class="ss"></i><button v-else :aria-label="n"><Icon :name="n" /></button></template></div>
            <div class="sp"><i class="gr"></i><button v-for="n in sideB" :key="n" :aria-label="n"><Icon :name="n" /></button></div>
          </aside>
        </div>

        <div class="cmdl">
          <div class="cmdh"><i class="gr"></i><b>✖</b><Icon name="wrench" /></div>
          <div class="cmdb">
            <output>Command: *Cancel*</output>
            <label><span class="pr">&gt;_</span><Icon name="tri" class="tri" /><input type="text" aria-label="Command" placeholder="Type a command" /></label>
          </div>
        </div>
      </div>
    </main>

    <footer class="status">
      <nav class="layouts"><button class="on">Model</button><button>Layout1</button><button class="pl" aria-label="New layout">+</button></nav>
      <div class="st">
        <div class="sg"><button>MODEL</button></div>
        <div class="sg"><Icon name="grid" /><Icon name="snap" /><Icon name="tri" class="tri" /></div>
        <div class="sg"><Icon name="ortho" /><Icon name="polar" /><Icon name="tri" class="tri" /><Icon name="iso" /><Icon name="tri" class="tri" /></div>
        <div class="sg"><Icon name="otrack" /><Icon name="osnap" class="glow" /><Icon name="tri" class="tri" /></div>
        <div class="sg"><Icon name="annoB" class="glow bl" /><Icon name="annoC" /><Icon name="anno" /><button>1:200</button><Icon name="tri" class="tri" /></div>
        <div class="sg"><Icon name="gear" class="sgear" /><Icon name="tri" class="tri" /></div>
        <div class="sg"><Icon name="plus" /></div>
        <div class="sg"><Icon name="shapes" /></div>
        <div class="sg"><Icon name="blue" class="glow" /></div>
        <div class="sg"><Icon name="isol" /><span>1.4</span></div>
        <div class="sg"><Icon name="sheet2" /></div>
        <div class="sg"><Icon name="full" /><Icon name="burger" /></div>
      </div>
    </footer>
  </div>
</template>

<style>
body { margin: 0; background: #373737; }
</style>

<style scoped>
* { box-sizing: border-box; }
.app { display: flex; flex-direction: column; height: 100vh; min-height: 1000px; overflow: hidden; background: #5b5b5b; color: #eee; font: 11px/16px "Open Sans", "Noto Sans", sans-serif; }
button, input, select { font: inherit; color: inherit; background: none; border: 0; padding: 0; margin: 0; white-space: nowrap; }
select { appearance: none; flex: 1; min-width: 0; }
h1, h2, ul, p { margin: 0; padding: 0; font-size: inherit; font-weight: 400; list-style: none; }
i { font-style: normal; }
.ic { width: 16px; height: 16px; flex: none; display: block; }
.ic.tri { width: 11px; height: 11px; color: #eee; }
.ic.tri.sm { width: 8px; height: 8px; }

.top { position: relative; flex: none; padding-left: 41px; background: #555; }
.appbtn { position: absolute; z-index: 2; left: 0; top: 0; width: 41px; height: 41px; background: linear-gradient(#d0d0d0, #6e6e6e); border: 1px solid #111; color: #111; display: grid; grid-template-columns: 29px 10px; align-items: center; grid-template-rows: 28px 10px; }
.appbtn .logo { width: 26px; height: 27px; margin-left: 3px; }
.appbtn .tri { width: 9px; height: 9px; color: #222; }
.appbtn b { font-size: 9px; line-height: 9px; grid-column: 1 / 3; }
.titlebar { display: flex; height: 24px; border-bottom: 1px solid #2a2a2a; background: #2b5f96; }
.qat { width: 174px; display: flex; align-items: center; background: linear-gradient(#b0b0b0, #7e7e7e); padding: 0 0 0 9px; gap: 8px; }
.qat .tri { margin: 0 -1px 0 -5px; }
.qat .dim { color: #bbb; }
.workspace { width: 179px; display: flex; align-items: center; gap: 4px; padding: 0 3px; background: linear-gradient(#5a5a5a, #6d6d6d); border: 1px solid #2f2f2f; }
.qatmore { width: 16px; background: #8b8b8b; padding-left: 3px; }
.glass { position: relative; flex: 1; overflow: hidden; background: linear-gradient(90deg, #7fa6cf, #a9c4df 25%, #8fb2d6 80%, #235690 84%, #1d4f88); border-bottom: 1px solid #bcd4ea; color: #111; }
.glass h1 { position: relative; display: flex; gap: 17px; justify-content: center; font-size: 11px; line-height: 23px; }
.haze { position: absolute; filter: blur(4px); background: #587ea8; height: 8px; top: 10px; opacity: .6; }
.h1 { left: 20px; width: 130px; } .h2 { left: 190px; width: 90px; background: #a05a70; } .h3 { left: 300px; width: 200px; } .h4 { left: 620px; width: 120px; }
.info { width: 446px; flex: none; display: flex; align-items: center; gap: 7px; background: linear-gradient(#adadad, #808080); color: #fff; }
.info .play { width: 6px; padding-left: 3px; }
.info input { width: 180px; height: 22px; background: #757575; border: 1px solid #333; padding: 0 3px; }
.info input::placeholder { color: #ddd; font-style: italic; opacity: 1; }
.info .ic + .ic { margin-left: 1px; }
.info .who { margin-right: -5px; }
.vsep { width: 1px; height: 22px; background: #999; }
.help { width: 16px; height: 16px; border-radius: 8px; background: #fff; border: 1px solid #335; color: #1550c0; font-weight: 700; font-size: 12px; line-height: 14px; text-align: center; }
.winctl { width: 122px; flex: none; display: flex; padding: 0 3px 0 17px; background: linear-gradient(90deg, #7d9cbc, #b7cbdf); border-bottom: 1px solid #bcd4ea; }
.winctl button { width: 28px; height: 18px; border: 1px solid #dce6f0; background: linear-gradient(#a9bdd0, #5d7896); color: #fff; display: grid; place-items: center; font-size: 10px; line-height: 12px; }
.winctl .cl { width: 46px; background: linear-gradient(#e0a090, #c8371e 50%, #a02a14); }
.mn { display: inline-block; width: 10px; height: 4px; background: #fff; border: 1px solid #333; }
.mx { display: inline-block; width: 10px; height: 9px; border: 2px solid #fff; outline: 1px solid #444; }
.menubar { display: grid; grid-template-columns: 42px 44px 49px 53px 59px 49px 52px 63px 87px 61px 66px 85px 63px 73px 68px 47px 73px 57px 68px 50px 1fr; height: 22px; margin-left: -41px; padding-left: 55px; background: linear-gradient(#a2a2a2, #5c5c5c); border-bottom: 1px solid #2c2c2c; color: #fff; }
.menubar button { text-align: left; }
.docctl { justify-self: end; display: flex; align-items: center; gap: 7px; padding-right: 5px; color: #222; }
.docctl .mn { background: #222; height: 2px; margin-top: 6px; } .docctl .mx { border-color: #222; outline: 0; }

.rtabs { flex: none; display: grid; grid-template-columns: 62px 49px 69px 58px 61px 45px 63px 58px 55px 91px 130px 45px 100px 1fr; height: 20px; padding-left: 4px; background: #535353; border-bottom: 1px solid #3a3a3a; color: #ddd; }
.rtabs button { text-align: left; padding-bottom: 2px; }
.rtabs .on { width: 41px; width: 50px; height: 20px; text-align: center; padding-bottom: 1px; background: #626262; border: 1px solid #333; border-bottom: 0; color: #fff; }
.rmin { display: flex; align-items: center; gap: 5px; } .rmin i { background: #ccc; color: #333; width: 13px; height: 8px; line-height: 8px; font-size: 8px; text-align: center; border-radius: 2px; }

.ribbon { flex: none; display: flex; height: 98px; background: linear-gradient(#4e4e4e, #383838); border-bottom: 1px solid #777; color: #7c7c7c; }
.panel { display: flex; flex-direction: column; flex: none; background: #5b5b5b; border-right: 1px solid #424242; box-shadow: inset -1px 0 #666; }
.panel .body { height: 79px; flex: none; display: flex; padding-top: 4px; }
.panel h2 { height: 18px; display: flex; align-items: center; justify-content: center; gap: 5px; background: #4a4a4a; color: #fff; border-bottom: 1px solid #333; white-space: nowrap; }
.palettes { width: 116px; } .ground { width: 129px; } .design { width: 322px; } .views { width: 133px; } .draw { width: 118px; } .modify { width: 250px; } .layers { width: 273px; } .clip { width: 79px; }
.ground .body { padding-left: 25px; } .design .body, .draw .body, .modify .body { padding-left: 7px; } .views .body { padding-left: 12px; }
.col { display: flex; flex-direction: column; flex: none; }
.design .col { width: 105px; } .design .col:nth-child(2) { width: 99px; }
.draw .col { width: 38px; } .modify .col { width: 72px; } .modify .col:nth-child(3) { width: 73px; } .modify .col:last-child { width: 20px; }
.cmd { display: flex; align-items: center; gap: 5px; height: 24px; color: #7c7c7c; }
.cmd .ic { color: #8d8d8d; } .cmd .ic.tri { width: 9px; height: 9px; color: #ddd; }
.palettes .body { padding-left: 4px; gap: 2px; }
.toolspace { width: 60px; height: 72px; background: linear-gradient(#7f98bf, #566a8b); border: 1px solid #3f5072; color: #53678a; display: flex; flex-direction: column; align-items: center; padding-top: 3px; gap: 3px; }
.toolspace .ic { width: 30px; height: 30px; }
.six { display: grid; grid-template-columns: 24px 24px; grid-template-rows: 24px 24px 24px; }
.six button { height: 22px; display: grid; place-items: center; }
.six .hot { background: linear-gradient(#7f98bf, #6178a0); border: 1px solid #3a4a6a; }
.big { display: flex; flex-direction: column; align-items: center; line-height: 14px; padding-top: 2px; color: #7c7c7c; }
.big .ic { width: 30px; height: 32px; color: #999; margin-bottom: 4px; }
.big .ic.tri { width: 9px; height: 9px; margin: 0; color: #ddd; }
.layers .big { width: 62px; } .clip .big { width: 55px; }
.lcol { width: 208px; color: #8a8a8a; }
.lcombo { height: 22px; display: flex; align-items: center; gap: 6px; border: 1px solid #3c3c3c; background: #666; padding: 0 4px; color: #aaa; box-shadow: 0 1px #6c6c6c; margin-top: 1px; }
.lst { width: 56px; height: 18px; flex: none; }
.lcombo .sw { width: 14px; height: 14px; background: #bdbdbd; border: 1px solid #444; flex: none; margin-left: -6px; }
.lrow { display: flex; align-items: center; height: 24px; gap: 8px; padding-left: 5px; color: #7c7c7c; }
.lrow span { margin-left: -3px; }
.lrow .ic { color: #8d8d8d; }

.doctabs { flex: none; display: flex; align-items: flex-end; height: 30px; padding: 0 0 0 18px; background: #383838; border-bottom: 4px solid #5b5b5b; color: #bbb; }
.dt { width: 127px; height: 22px; text-align: left; padding-left: 13px; background: linear-gradient(#525252, #4a4a4a); border: 1px solid #5c5c5c; border-bottom: 0; border-radius: 9px 9px 0 0; }
.dt.on { width: 123px; padding-left: 9px; background: linear-gradient(#7a7a7a, #5b5b5b); color: #fff; }
.dt span { color: #3a3a3a; font-size: 9px; margin-left: 8px; }
.add { width: 22px; height: 16px; margin: 0 0 3px 7px; background: #4c4c4c; border-radius: 3px 3px 9px 3px; font: bold 14px/14px "Open Sans", sans-serif; border: 1px solid #606060; }

.work { flex: 1; display: flex; min-height: 0; background: #5b5b5b; }
.ts { width: 375px; flex: none; display: flex; }
.tsmain { width: 352px; display: flex; flex-direction: column; }
.tshead { height: 20px; margin-top: 2px; padding-left: 15px; font-size: 12px; line-height: 18px; background: #4e4e4e; border-radius: 0 5px 0 0; }
.tsbar { height: 30px; display: flex; align-items: center; gap: 11px; padding: 0 6px 0 5px; }
.grow { flex: 1; }
.q { width: 16px; height: 16px; background: #eef2f6; border: 1px solid #345; color: #234; line-height: 14px; text-align: center; font-size: 12px; }
.tssel { height: 20px; display: flex; align-items: center; padding: 0 4px 0 3px; color: #111; background: linear-gradient(#fff, #d4d4d4); margin-left: 1px; border-radius: 2px; }
.tssel .tri { color: #111; }
.treebox { position: relative; flex: 1; margin: 3px 0 8px; min-height: 0; display: flex; flex-direction: column; background: #fff; border: 1px solid #828790; color: #000; }
.treetop { flex: 1; display: flex; min-height: 0; }
.tree { flex: 1; overflow: hidden; padding: 1px 0 0 4px; }
.tree li { display: flex; align-items: center; height: 20px; }
.tree .ic { margin-left: 2px; }
.gd, .nd { width: 19px; height: 20px; flex: none; position: relative; }
.gd.ln { background: repeating-linear-gradient(#888 0 1px, transparent 1px 3px) 9px 0 / 1px 100% no-repeat; }
.nd { background: repeating-linear-gradient(#888 0 1px, transparent 1px 3px) 9px 0 / 1px 10px no-repeat, repeating-linear-gradient(90deg, #888 0 1px, transparent 1px 3px) 9px 9px / 10px 1px no-repeat; }
.nd.on { background-size: 1px 100%, 10px 1px; }
.nd.root { background-position: 9px 10px, 9px 9px; }
.ex { position: absolute; left: 5px; top: 5px; width: 9px; height: 9px; border: 1px solid #8e8e8e; border-radius: 1px; background: linear-gradient(#2f4f9f, #2f4f9f) center / 5px 1px no-repeat, #f4f4f4; }
.ex.plus { background: linear-gradient(#2f4f9f, #2f4f9f) center / 5px 1px no-repeat, linear-gradient(#2f4f9f, #2f4f9f) center / 1px 5px no-repeat, #f4f4f4; }
.ex.dot { background: radial-gradient(#000 2px, #eee 3px); }
.lb { padding: 0 5px; margin-left: 2px; line-height: 18px; white-space: nowrap; }
.tree li .lb { margin-top: -1px; }
.root .lb { font-weight: 700; }
.sel .lb { flex: 1; background: #a0a0a0; padding-left: 4px; margin-left: 3px; }
.tree .mark { margin-left: 3px; } .tree .flag { width: 8px; height: 8px; margin: -10px 8px 0 3px; }
.vs { width: 16px; margin-right: 1px; background: #f0f0f0; display: flex; flex-direction: column; align-items: center; padding: 5px 0; gap: 5px; }
.vs .tri, .hs .tri { color: #444; width: 9px; height: 9px; } .up { transform: rotate(180deg); } .lf { transform: rotate(90deg); } .rt { transform: rotate(-90deg); }
.vs .thumb { width: 15px; height: 414px; border: 1px solid #979797; border-radius: 2px; background: linear-gradient(90deg, #f5f5f5, #e4e4e4 50%, #cfcfcf); margin-bottom: auto; display: grid; place-items: center; }
.vs .thumb i { width: 8px; height: 9px; background: repeating-linear-gradient(#555 0 1px, #ddd 1px 3px); }
.hs { height: 17px; flex: none; background: #f0f0f0; display: flex; align-items: center; padding: 0 3px; gap: 7px; }
.hs .thumb { width: 291px; height: 15px; border: 1px solid #979797; border-radius: 2px; background: linear-gradient(#f5f5f5, #e4e4e4 50%, #cfcfcf); display: grid; place-items: center; }
.hs .thumb i { width: 9px; height: 7px; background: repeating-linear-gradient(90deg, #555 0 1px, #ddd 1px 3px); }
.mk { position: absolute; border: 5px solid #ed1c24; pointer-events: none; }
.mk1 { left: 16px; top: 141px; width: 306px; height: 284px; }
.detail { height: 94px; flex: none; border: 1px solid #9a9a9a; margin-bottom: 4px; }
.tstabs { width: 20px; display: flex; flex-direction: column; padding-top: 24px; }
.tstabs button { height: 121px; width: 20px; writing-mode: vertical-rl; transform: rotate(180deg); text-align: center; border: 1px solid #333; border-right: 0; border-radius: 4px 0 0 4px; color: #a5a5a5; background: #535353; font-size: 12px; }
.tstabs .on { color: #eee; background: #5b5b5b; }
.right { flex: 1; min-width: 0; display: flex; flex-direction: column; }
.upper { flex: 1; display: flex; min-height: 0; }
.canvas { position: relative; flex: 1; background: #212830; overflow: hidden; }
.dwg { display: block; position: absolute; inset: 0; }
.vp { fill: #eee; font: 11px "Open Sans", sans-serif; }
.mg { fill: #f0f; font: 15px "Liberation Sans", sans-serif; }
.gn { fill: #0e0; font: 12px "Liberation Sans", sans-serif; }
.wt { fill: #eee; font: 12px "Liberation Sans", sans-serif; }
.rd text { fill: #f00; font: 14px "Liberation Sans", sans-serif; }
.cmp text { fill: #b4b7ba; font: bold 18px "Liberation Sans", sans-serif; text-anchor: middle; }
.cmp .tp { fill: #555d68; font-size: 11px; }
.wcs { fill: #555; font: 11px "Liberation Sans", sans-serif; }

.dlg { position: absolute; display: flex; flex-direction: column; padding: 0 6px 6px; border: 1px solid #0d1319; border-radius: 7px 7px 4px 4px; box-shadow: inset 0 0 0 1px #a8b4c0, 0 0 10px 3px rgba(0, 0, 0, .6); color: #000; font: 11px/13px Roboto, "Liberation Sans", sans-serif; }
.dlg header { position: relative; height: 27px; flex: none; display: flex; align-items: center; gap: 5px; font: 11px/16px "Open Sans", sans-serif; }
.dl { background: #dfeaf4; }
.client { position: relative; flex: 1; display: flex; flex-direction: column; min-height: 0; background: #f0f0f0; border: 1px solid #1c2530; box-shadow: 0 0 0 1px #9fb0c0; }
.dx { position: absolute; right: 0; top: 0; width: 48px; height: 19px; border: 1px solid #99a4ae; border-top: 0; border-radius: 0 0 4px 4px; color: #fff; font-size: 11px; line-height: 16px; }
.dx.red { background: linear-gradient(#d99a92, #c2473a 50%, #8e2016); }
.d1 { left: 244px; top: 83px; width: 683px; height: 485px; background: linear-gradient(90deg, #4a3f58, #3c4450 25%, #27313c 60%, #3c4853); }
.d1 .dt1 { padding: 0 8px; margin-left: -8px; border-radius: 8px; background: rgba(150, 130, 160, .5); box-shadow: 0 0 6px 3px rgba(150, 130, 160, .5); color: #111; }
.blot { position: absolute; background: #c01818; filter: blur(4px); height: 8px; } .b1 { left: 292px; top: 7px; width: 42px; } .b2 { left: 296px; top: 19px; width: 76px; height: 6px; }
.d1 .client { padding: 7px 6px 0 7px; }
.tabrow { display: flex; align-items: flex-end; height: 20px; gap: 2px; }
.tabrow button { height: 18px; padding: 0 0 1px; text-align: center; background: linear-gradient(#f4f4f4, #d4d4d4); border-right: 2px solid #777; border-left: 1px solid #999; width: 66px; }
.tabrow button:nth-child(2) { width: 69px; } .tabrow button:nth-child(4) { width: 74px; } .tabrow button:nth-child(5) { width: 67px; }
.tabrow .on { height: 21px; width: 54px; margin: 0 -1px -1px; background: #fff; border-left-color: #fff; z-index: 1; }
.page { height: 381px; display: flex; flex-direction: column; padding: 11px 13px 0 14px; background: #fafafa; border: 1px solid #fff; border-right: 2px solid #777; border-bottom: 2px solid #777; }
.prow { display: flex; justify-content: space-between; align-items: flex-start; height: 29px; }
.prow span { margin-top: 13px; }
.btn { height: 21px; width: 76px; flex: none; border: 1px solid #707070; border-radius: 3px; background: linear-gradient(#f4f4f4, #ebebeb 50%, #dcdcdc 51%, #cfcfcf); box-shadow: inset 0 0 0 1px #fafafa; }
.btn.more { width: 178px; margin-right: -1px; }
.btn.def { border-color: #2b7ea8; box-shadow: inset 0 0 0 2px #48c8f0; }
.gridbox { flex: 1; min-height: 0; overflow: hidden; border: 1px solid #828790; border-width: 1px 1px 2px 2px; background: #ffffe9; }
.g1 { flex: none; height: 290px; }
table { width: 100%; height: 100%; border-collapse: separate; border-spacing: 0; table-layout: fixed; font: 11px/16px "Open Sans", sans-serif; }
th { height: 21px; padding: 0 7px; text-align: left; font-weight: 400; background: linear-gradient(#fff, #fff 50%, #f1f2f4); border-right: 1px solid #dfdfe2; border-bottom: 2px solid #8a8f98; white-space: nowrap; }
td { height: 20px; padding: 0 4px; border-right: 1px solid #ffb9b9; white-space: nowrap; overflow: hidden; }
.fill td { height: auto; } td:last-child { border-right: 0; }
.g1 .w1 { width: 169px; } .g1 .wl { width: 8px; } th.wl { padding: 0; }
td.ed { background: #fff; border-bottom: 1px solid #7f9db9; } tr:first-child td.ed { border-top: 1px solid #7f9db9; } .off { color: #777; }
.nm { display: flex; align-items: center; height: 20px; padding-left: 9px; }
.nm .ic { margin-right: 7px; }
.stub { width: 11px; height: 20px; flex: none; background: repeating-linear-gradient(#777 0 1px, transparent 1px 3px) 0 0 / 1px 100% no-repeat, repeating-linear-gradient(90deg, #777 0 1px, transparent 1px 3px) 0 10px / 9px 1px no-repeat; }
.stub.first { background-position: 0 10px, 0 10px; } .stub.last { background-size: 1px 10px, 9px 1px; } .stub.only { background-size: 0 0, 9px 1px; }
.chk { display: flex; align-items: center; gap: 3px; margin-top: 21px; } .chk input { appearance: none; width: 12px; height: 12px; border: 1px solid #8e8f8f; background: linear-gradient(135deg, #d4d6d8, #fff); }
.dbtns { display: flex; gap: 8px; justify-content: flex-end; }
.d1 .dbtns { margin-top: 12px; padding-right: 169px; }
.mk2 { left: 463px; top: 57px; width: 202px; height: 46px; }
.d2 { left: 749px; top: 262px; width: 684px; height: 487px; background: linear-gradient(90deg, #cfe2f3, #b4d0ea 22%, #2b66b4 26%, #3a78c4 60%, #2c5d9c); }
.d2 .client { padding: 10px 12px 12px; }
.fields { display: flex; gap: 38px; } .fields label { display: flex; flex-direction: column; gap: 4px; width: 230px; }
.fields input { height: 19px; background: #f0f0f0; border: 1px solid #fff; border-top-color: #aaa; border-left-color: #aaa; padding: 0 4px; }
.note { display: flex; gap: 23px; margin-right: -10px; padding: 15px 0 0 4px; height: 57px; } .note svg { width: 20px; height: 30px; flex: none; }
.lists { display: flex; height: 297px; } .la, .lbx { display: flex; flex-direction: column; gap: 2px; } .la { width: 139px; } .lbx { width: 401px; }
.la .nm { padding-left: 9px; }
.d2 th { height: 22px; }
.la td { border: 0; } .la > .hs .thumb { width: 74px; margin-right: auto; } .la .hs { border: 1px solid #ddd; padding: 0 2px; }
.hl { background: #39f; color: #fff; line-height: 19px; flex: 1; padding: 0 4px; margin-left: -4px; }
.lbx .w1 { width: 187px; } .lbx .wl { width: 6px; } .lbx th { padding: 0 6px; } .lbx th.wl { padding: 0; } .lbx td { padding: 0 3px; }
.lbx .nm { padding-left: 12px; }
.mid { width: 106px; display: flex; flex-direction: column; align-items: center; gap: 37px; padding-top: 97px; } .mid .btn { width: 74px; }
.d2 .dbtns { margin-top: 21px; padding-right: 1px; }
.grip { position: absolute; right: 1px; bottom: 1px; width: 11px; height: 11px; background: repeating-linear-gradient(135deg, #bbb 0 1px, transparent 1px 3px); clip-path: polygon(100% 0, 100% 100%, 0 100%); }
.mk3 { left: 37px; top: 157px; width: 128px; height: 89px; }
.arrow { position: absolute; left: 160px; top: 220px; width: 154px; height: 28px; }

.side { width: 31px; flex: none; padding: 0 3px; display: flex; flex-direction: column; gap: 2px; }
.sp { border: 2px solid #3f3f3f; border-radius: 2px; display: flex; flex-direction: column; align-items: center; background: #5f5f5f; padding-bottom: 1px; }
.sp button { height: 22px; width: 20px; display: grid; place-items: center; }
.gr { width: 14px; height: 4px; margin: 2px 0; background: repeating-linear-gradient(90deg, #222 0 1px, transparent 1px 2px); }
.ss { width: 19px; height: 1px; background: #ddd; margin: 2px 0 3px; }
.cmdl { height: 53px; flex: none; display: flex; margin-top: 2px; border: 1px solid #888; }
.cmdh { width: 22px; display: flex; flex-direction: column; align-items: center; justify-content: space-between; background: linear-gradient(#8a8a8a, #333); border-right: 1px solid #555; padding-bottom: 1px; }
.cmdh b { font-size: 12px; line-height: 12px; } .cmdh .gr { height: 5px; background: repeating-linear-gradient(90deg, #ccc 0 1px, transparent 1px 3px); } .cmdh .ic { width: 14px; height: 14px; }
.cmdb { flex: 1; display: flex; flex-direction: column; color: #000; font: 11px/16px "DejaVu Sans Mono", monospace; }
.cmdb output { height: 29px; padding: 11px 2px 0; background: #c8c8c8; border-bottom: 1px solid #777; }
.cmdb label { flex: 1; display: flex; align-items: center; gap: 3px; padding-left: 5px; background: #fff; } .cmdb input { flex: 1; padding-left: 4px; } .cmdb input::placeholder { color: #8c8c8c; font-style: italic; opacity: 1; }
.pr { width: 14px; height: 14px; border: 1px solid #99a; background: #dfe4ea; font-size: 8px; line-height: 11px; } .cmdb .ic.tri { color: #777; width: 8px; height: 8px; }

.status { flex: none; display: flex; justify-content: space-between; height: 29px; background: #373737; color: #eee; }
.layouts { display: flex; align-items: flex-start; gap: 2px; padding-left: 13px; }
.layouts button { height: 18px; width: 60px; color: #aaa; background: #4c4c4c; border-radius: 0 0 9px 9px; font-size: 12px; line-height: 15px; }
.layouts .on { background: #6d6d6d; color: #fff; font-weight: 700; width: 56px; } .layouts .pl { width: 21px; height: 16px; font-weight: 700; margin-left: 6px; font-size: 14px; line-height: 12px; border-radius: 3px 0 9px 3px; }
.st { display: flex; gap: 1px; }
.sg { width: 26px; height: 26px; display: flex; align-items: center; justify-content: space-around; border: 1px solid #787878; background: #505050; color: #bdbdbd; font-size: 12px; }
.sg button, .sg span { color: #fff; }
.sg:nth-child(1) { width: 50px; font-size: 12px; } .sg:nth-child(2) { width: 66px; } .sg:nth-child(3) { width: 104px; } .sg:nth-child(4) { width: 65px; } .sg:nth-child(5) { width: 126px; } .sg:nth-child(6) { width: 40px; } .sg:nth-child(10) { width: 56px; } .sg:nth-child(12) { width: 50px; } .sg:nth-child(11) { width: 24px; }
.sgear { width: 13px; height: 13px; }
.glow { filter: drop-shadow(0 0 2px #0a6cff); } .bl { color: #1f8fff; }
</style>
